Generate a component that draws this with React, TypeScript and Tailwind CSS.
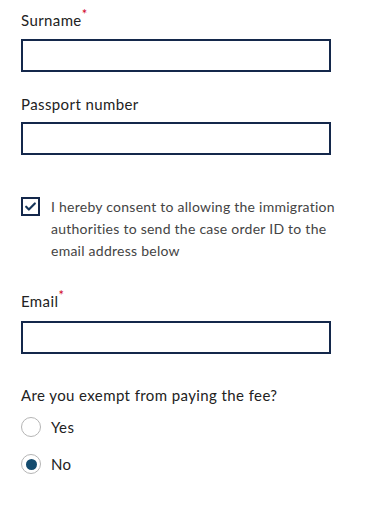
import React from 'react'

const Label: React.FC<{ text: string; required?: boolean; className?: string }> = ({ text, required, className }) => (
  <div className={`h-5 leading-5 text-[15px] tracking-[0.4px] text-[#222] ${className ?? ''}`}>
    {text}
    {required && <span className="relative -top-[7px] text-[13px] text-[#d0021b]">*</span>}
  </div>
)

const TextInput: React.FC<{ className?: string }> = ({ className }) => (
  <input type="text" className={`block h-[33px] w-[310px] border-2 border-[#14284b] bg-white outline-none ${className ?? ''}`} />
)

const Radio: React.FC<{ label: string; checked?: boolean; className?: string }> = ({ label, checked, className }) => (
  <div className={`flex h-5 items-center ${className ?? ''}`}>
    <span className="flex h-5 w-5 shrink-0 items-center justify-center rounded-full border border-[#b5b5b5] bg-white">
      {checked && <span className="h-[11px] w-[11px] rounded-full bg-[#144b6e]" />}
    </span>
    <span className="ml-[10px] text-[15px] tracking-[0.4px] text-[#222]">{label}</span>
  </div>
)

export default function App() {
  return (
    <div className="min-h-[512px] bg-white pl-[21px] pt-[10px] font-['Lato','Noto_Sans',sans-serif]">
      <Label text="Surname" required />
      <TextInput className="mt-[9px]" />

      <Label text="Passport number" className="mt-[22px]" />
      <TextInput className="mt-[8px]" />

      <div className="mt-[41px] flex items-start">
        <span className="mt-[1px] flex h-[19px] w-[19px] shrink-0 items-center justify-center border-2 border-[#14284b] bg-white">
          <svg viewBox="0 0 24 24" className="h-[13px] w-[13px]" fill="none" stroke="#17365a" strokeWidth="4" strokeLinecap="round" strokeLinejoin="round">
            <path d="M4 12.5l5 5L20 6.5" />
          </svg>
        </span>
        <p className="ml-[11px] w-[292px] text-[14px] leading-[22px] tracking-[0.25px] text-[#444]">
          I hereby consent to allowing the immigration authorities to send the case order ID to the email address below
        </p>
      </div>

      <Label text="Email" required className="mt-[29px]" />
      <TextInput className="mt-[10px]" />

      <Label text="Are you exempt from paying the fee?" className="mt-[31px]" />
      <Radio label="Yes" className="mt-[12px]" />
      <Radio label="No" checked className="mt-[17px]" />
    </div>
  )
}
